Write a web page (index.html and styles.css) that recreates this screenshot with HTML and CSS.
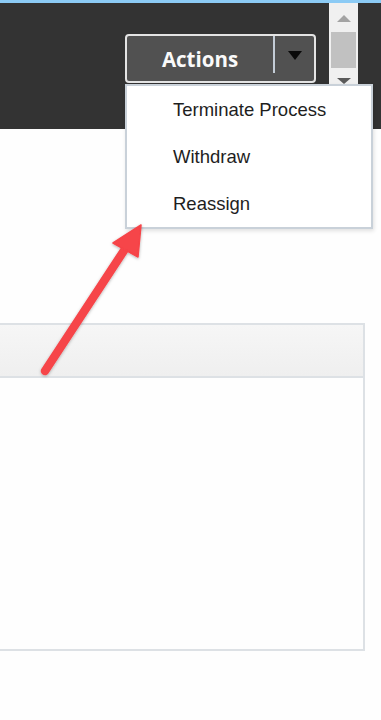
FILE: index.html
```html
<!DOCTYPE html>
<html>
<head>
<meta charset="utf-8">
<link rel="stylesheet" href="styles.css">
</head>
<body>
<div class="topline"></div>
<header class="header">
  <div class="actions">
    <span class="actions-label">Actions</span>
    <span class="actions-sep"></span>
    <span class="actions-caret"></span>
  </div>
  <div class="scrollbar">
    <span class="sb-up"></span>
    <span class="sb-thumb"></span>
    <span class="sb-down"></span>
  </div>
</header>
<ul class="menu">
  <li>Terminate Process</li>
  <li>Withdraw</li>
  <li>Reassign</li>
</ul>
<main class="main">
  <section class="panel">
    <div class="panel-head"></div>
    <div class="panel-body"></div>
  </section>
</main>
<svg class="arrow" width="381" height="720" viewBox="0 0 381 720">
  <defs>
    <filter id="sh" x="-20%" y="-20%" width="140%" height="140%">
      <feDropShadow dx="0" dy="1" stdDeviation="1.5" flood-color="#000" flood-opacity="0.3"/>
    </filter>
  </defs>
  <g filter="url(#sh)" fill="#f64448" stroke="#f64448">
    <line x1="45" y1="371" x2="127" y2="246" stroke-width="8.5" stroke-linecap="round"/>
    <polygon points="141,225 113,243 138,257" stroke-width="1.5" stroke-linejoin="round"/>
  </g>
</svg>
</body>
</html>
```
FILE: styles.css
```css
html, body {
  margin: 0;
  padding: 0;
  background: #fefefe;
}
body {
  position: relative;
  width: 381px;
  height: 720px;
  overflow: hidden;
}
.topline {
  height: 3px;
  background: #8ccbf5;
}
.header {
  height: 126px;
  background: #333333;
  display: flex;
  align-items: flex-start;
}
.actions {
  margin: 31px 0 0 125px;
  width: 187px;
  height: 45px;
  border: 2px solid #e4e4e4;
  border-radius: 4px;
  background: #515151;
  display: flex;
  align-items: center;
  box-sizing: content-box;
}
.actions-label {
  width: 146px;
  text-align: center;
  font-family: "Open Sans", sans-serif;
  font-weight: 700;
  font-size: 20.5px;
  color: #fafafa;
  line-height: 1;
  margin-top: 1px;
}
.actions-sep {
  width: 2px;
  align-self: stretch;
  margin-bottom: 8px;
  background: #c3ccd6;
}
.actions-caret {
  margin-left: 13px;
  width: 0;
  height: 0;
  border-left: 7px solid transparent;
  border-right: 7px solid transparent;
  border-top: 9px solid #0a0a0a;
  margin-top: -6px;
}
.scrollbar {
  margin-left: 13px;
  width: 29px;
  height: 100px;
  background: #f0f0f0;
  display: flex;
  flex-direction: column;
  align-items: center;
}
.sb-up {
  margin-top: 12px;
  width: 0;
  height: 0;
  border-left: 7px solid transparent;
  border-right: 7px solid transparent;
  border-bottom: 7px solid #a3a3a3;
}
.sb-thumb {
  margin-top: 10px;
  width: 25px;
  height: 36px;
  background: #c1c1c1;
}
.sb-down {
  margin-top: 10px;
  width: 0;
  height: 0;
  border-left: 7px solid transparent;
  border-right: 7px solid transparent;
  border-top: 6px solid #5a5a5a;
}
.menu {
  position: absolute;
  left: 125px;
  top: 84px;
  width: 244px;
  height: 141px;
  margin: 0;
  padding: 0;
  list-style: none;
  background: #ffffff;
  border: 2px solid #c9d1d9;
  box-shadow: 1px 2px 4px rgba(0,0,0,0.12);
  box-sizing: content-box;
}
.menu li {
  height: 47px;
  line-height: 47px;
  padding-left: 46px;
  font-family: "Liberation Sans", Arial, sans-serif;
  font-size: 18.5px;
  color: #1e1e1e;
}
.main {
  padding-top: 194px;
}
.panel {
  margin-left: -20px;
  width: 381px;
  height: 324px;
  border: 2px solid #dde1e5;
  background: #fefefe;
  box-sizing: content-box;
}
.panel-head {
  height: 51px;
  border-bottom: 2px solid #dde1e5;
  background: linear-gradient(#f6f6f6, #efefef);
}
.arrow {
  position: absolute;
  left: 0;
  top: 0;
  pointer-events: none;
}
```
